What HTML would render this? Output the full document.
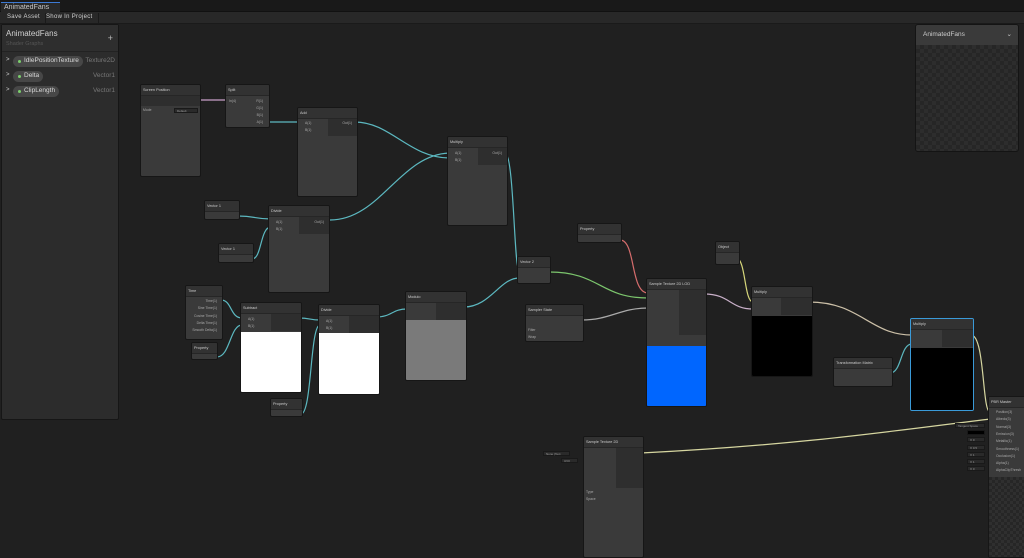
<!DOCTYPE html>
<html><head><meta charset="utf-8"><style>
*{margin:0;padding:0;box-sizing:border-box}
body{width:1024px;height:556px;background:#202020;overflow:hidden;position:relative;font-family:"Liberation Sans",sans-serif;color:#c4c4c4}
.tabbar{position:absolute;left:0;top:0;width:1024px;height:12px;background:#191919;border-bottom:1px solid #111}
.tab{position:absolute;left:1px;top:2px;width:59px;height:11px;background:#282828;border-top:1px solid #3d7ad4;font-size:7px;padding:1px 3px;color:#c8c8c8}
.tool{position:absolute;left:0;top:12px;width:1024px;height:12px;background:#282828;border-bottom:1px solid #1a1a1a}
.btn{position:absolute;top:1px;height:10px;font-size:6px;color:#d0d0d0;padding:1px 5px;border-right:1px solid #1a1a1a;letter-spacing:.3px}
.bb{position:absolute;left:1px;top:24px;width:118px;height:396px;background:#2c2c2c;border:1px solid #161616;border-radius:2px}
.bbh{height:27px;border-bottom:1px solid #222;background:#2e2e2e;padding:4px 4px}
.bbh .t{font-size:8px;color:#d0d0d0}
.bbh .s{font-size:5.5px;color:#555;margin-top:3px}
.prop{position:absolute;left:0;width:118px;height:13px;font-size:6.5px}
.pill{position:absolute;left:11px;top:1px;height:11px;border-radius:6px;background:#474747;padding:1px 4px 0 11px;color:#d8d8d8;white-space:nowrap}
.pill:before{content:"";position:absolute;left:5px;top:4px;width:3px;height:3px;border-radius:50%;background:#7ccf6d}
.arr{position:absolute;left:4px;top:2px;font-size:6px;color:#ccc}
.ty{position:absolute;right:5px;top:2px;color:#777}
.n{position:absolute;background:#3a3a3a;border:1px solid #161616;border-radius:2px;overflow:hidden;font-size:3.5px;color:#bbb}
.h{height:11px;background:#323232;border-bottom:1px solid #262626;padding:3px 2px;font-size:3.8px;color:#ccc;white-space:nowrap}
.pv{position:absolute;left:0;right:0;bottom:0}
.dk{position:absolute;background:#2e2e2e}
.sel{border:1px solid #3a9ad8}
.p{position:absolute;font-size:3.4px;color:#aaa;white-space:nowrap}
.d{position:absolute;width:3px;height:3px;border-radius:50%;background:#5cc0c8}
.prev{position:absolute;left:915px;top:24px;width:104px;height:128px;border:1px solid #141414;border-radius:3px;overflow:hidden;
background-color:#262626;background-image:linear-gradient(45deg,#2d2d2d 25%,transparent 25%,transparent 75%,#2d2d2d 75%),linear-gradient(45deg,#2d2d2d 25%,transparent 25%,transparent 75%,#2d2d2d 75%);background-size:8px 8px;background-position:0 0,4px 4px}
.prevh{height:20px;background:#3a3a3a;font-size:6.5px;color:#ccc;padding:6px 7px}
.chk{background-color:#262626;background-image:linear-gradient(45deg,#2f2f2f 25%,transparent 25%,transparent 75%,#2f2f2f 75%),linear-gradient(45deg,#2f2f2f 25%,transparent 25%,transparent 75%,#2f2f2f 75%);background-size:6px 6px;background-position:0 0,3px 3px}
.f{position:absolute;height:5px;background:#2a2a2a;border:1px solid #191919;font-size:3px;color:#999;padding-left:2px}
</style></head><body>
<div class="tabbar"><div class="tab">AnimatedFans</div></div>
<div class="tool"><div class="btn" style="left:2px">Save Asset</div><div class="btn" style="left:41px">Show In Project</div></div>

<svg style="position:absolute;left:0;top:0" width="1024" height="556" fill="none" stroke-width="1.2">
<g stroke="#5cb8c0">
<path d="M255 122 C280 122 275 122 301 122"/>
<path d="M355 122 C390 122 410 158 449 158"/>
<path d="M330 220 C380 220 400 155 449 153"/>
<path d="M238 216 C255 216 255 219 271 219"/>
<path d="M252 259 C262 259 260 227 271 227"/>
<path d="M505 153 C514 153 514 270 519 270"/>
<path d="M221 300 C232 300 230 318 242 318"/>
<path d="M217 357 C230 357 230 325 242 325"/>
<path d="M299 318 C310 318 310 320 320 320"/>
<path d="M301 414 C312 414 310 325 320 325"/>
<path d="M376 317 C392 317 392 309 407 309"/>
<path d="M464 307 C490 307 500 278 519 278"/>
<path d="M890 373 C902 373 900 344 912 344"/>
</g>
<path d="M198 100 L227 100" stroke="#c9a0c9"/>
<path d="M549 272 C600 272 600 298 648 298" stroke="#7cc66d"/>
<path d="M620 240 C636 240 630 293 648 293" stroke="#d56c6c"/>
<path d="M582 320 C610 320 620 308 648 308" stroke="#aaa"/>
<path d="M704 294 C730 294 730 309 753 309" stroke="#c9b0c9"/>
<path d="M736 258 C746 258 744 302 753 302" stroke="#d6d67a"/>
<path d="M809 302 C860 302 870 335 912 335" stroke="#ccc0a8"/>
<path d="M971 335 C985 335 982 412 990 412" stroke="#d6d6a0"/>
<path d="M641 453 C800 445 900 430 990 419" stroke="#d6d6a0"/>
</svg>

<div class="bb">
<div class="bbh"><div class="t">AnimatedFans</div><div class="s">Shader Graphs</div><div style="position:absolute;right:5px;top:8px;font-size:9px;color:#bbb">+</div></div>
<div class="prop" style="top:30px"><span class="arr">&gt;</span><span class="pill">IdlePositionTexture</span><span class="ty">Texture2D</span></div>
<div class="prop" style="top:45px"><span class="arr">&gt;</span><span class="pill">Delta</span><span class="ty">Vector1</span></div>
<div class="prop" style="top:60px"><span class="arr">&gt;</span><span class="pill">ClipLength</span><span class="ty">Vector1</span></div>
</div>

<div class="n" style="left:140px;top:84px;width:61px;height:93px"><div class="h">Screen Position</div><div class="dk" style="left:0;right:0;top:11px;height:10px"></div><span class="p" style="left:2px;top:23px">Mode</span><div class="f" style="left:33px;top:23px;width:24px">Default</div></div>
<div class="n" style="left:225px;top:84px;width:45px;height:44px"><div class="h">Split</div><span class="p" style="left:3px;top:14px">In(4)</span><span class="p" style="right:6px;top:14px">R(1)</span><span class="p" style="right:6px;top:21px">G(1)</span><span class="p" style="right:6px;top:28px">B(1)</span><span class="p" style="right:6px;top:35px">A(1)</span></div>
<div class="n" style="left:297px;top:107px;width:61px;height:90px"><div class="h">Add</div><div class="dk" style="left:30px;right:0;top:11px;height:17px"></div><span class="p" style="left:7px;top:13px">A(1)</span><span class="p" style="left:7px;top:20px">B(1)</span><span class="p" style="right:5px;top:13px">Out(1)</span></div>
<div class="n" style="left:447px;top:136px;width:61px;height:90px"><div class="h">Multiply</div><div class="dk" style="left:30px;right:0;top:11px;height:17px"></div><span class="p" style="left:7px;top:14px">A(1)</span><span class="p" style="left:7px;top:21px">B(1)</span><span class="p" style="right:5px;top:14px">Out(1)</span></div>
<div class="n" style="left:204px;top:200px;width:36px;height:20px"><div class="h">Vector 1</div></div>
<div class="n" style="left:268px;top:205px;width:62px;height:88px"><div class="h">Divide</div><div class="dk" style="left:30px;right:0;top:11px;height:17px"></div><span class="p" style="left:7px;top:14px">A(1)</span><span class="p" style="left:7px;top:21px">B(1)</span><span class="p" style="right:5px;top:14px">Out(1)</span></div>
<div class="n" style="left:218px;top:243px;width:36px;height:20px"><div class="h">Vector 1</div></div>
<div class="n" style="left:185px;top:285px;width:38px;height:55px"><div class="h">Time</div><span class="p" style="right:5px;top:13px">Time(1)</span><span class="p" style="right:5px;top:20px">Sine Time(1)</span><span class="p" style="right:5px;top:28px">Cosine Time(1)</span><span class="p" style="right:5px;top:35px">Delta Time(1)</span><span class="p" style="right:5px;top:42px">Smooth Delta(1)</span></div>
<div class="n" style="left:191px;top:342px;width:27px;height:18px"><div class="h">Property</div></div>
<div class="n" style="left:240px;top:302px;width:62px;height:91px"><div class="h">Subtract</div><div class="dk" style="left:30px;right:0;top:11px;height:17px"></div><span class="p" style="left:7px;top:14px">A(1)</span><span class="p" style="left:7px;top:21px">B(1)</span><div class="pv" style="top:29px;background:#fff"></div></div>
<div class="n" style="left:318px;top:304px;width:62px;height:91px"><div class="h">Divide</div><div class="dk" style="left:30px;right:0;top:11px;height:17px"></div><span class="p" style="left:7px;top:14px">A(1)</span><span class="p" style="left:7px;top:21px">B(1)</span><div class="pv" style="top:28px;background:#fff"></div></div>
<div class="n" style="left:270px;top:398px;width:33px;height:19px"><div class="h">Property</div></div>
<div class="n" style="left:405px;top:291px;width:62px;height:90px"><div class="h">Modulo</div><div class="dk" style="left:30px;right:0;top:11px;height:17px"></div><div class="pv" style="top:28px;background:#7a7a7a"></div></div>
<div class="n" style="left:517px;top:256px;width:34px;height:28px"><div class="h">Vector 2</div></div>
<div class="n" style="left:525px;top:304px;width:59px;height:38px"><div class="h">Sampler State</div><span class="p" style="left:2px;top:23px">Filter</span><span class="p" style="left:2px;top:30px">Wrap</span></div>
<div class="n" style="left:577px;top:223px;width:45px;height:20px"><div class="h">Property</div></div>
<div class="n" style="left:646px;top:278px;width:61px;height:129px"><div class="h">Sample Texture 2D LOD</div><div class="dk" style="left:32px;right:0;top:11px;height:45px"></div><div class="pv" style="top:67px;background:#0066ff"></div></div>
<div class="n" style="left:715px;top:241px;width:25px;height:24px"><div class="h">Object</div></div>
<div class="n" style="left:751px;top:286px;width:62px;height:91px"><div class="h">Multiply</div><div class="dk" style="left:29px;right:0;top:11px;height:17px"></div><div class="pv" style="top:29px;background:#000"></div></div>
<div class="n" style="left:833px;top:357px;width:60px;height:30px"><div class="h">Transformation Matrix</div></div>
<div class="n sel" style="left:910px;top:318px;width:64px;height:93px"><div class="h">Multiply</div><div class="dk" style="left:31px;right:0;top:11px;height:17px"></div><div class="pv" style="top:29px;background:#000"></div></div>
<div class="n" style="left:988px;top:396px;width:40px;height:162px"><div class="h">PBR Master</div><span class="p" style="left:7px;top:13px">Position(3)</span><span class="p" style="left:7px;top:20px">Albedo(3)</span><span class="p" style="left:7px;top:28px">Normal(3)</span><span class="p" style="left:7px;top:35px">Emission(3)</span><span class="p" style="left:7px;top:42px">Metallic(1)</span><span class="p" style="left:7px;top:50px">Smoothness(1)</span><span class="p" style="left:7px;top:57px">Occlusion(1)</span><span class="p" style="left:7px;top:64px">Alpha(1)</span><span class="p" style="left:7px;top:71px">AlphaClipThresh</span><div class="pv chk" style="top:80px"></div></div>
<div class="f" style="left:955px;top:423px;width:30px">Tangent Space</div>
<div class="f" style="left:967px;top:430px;width:18px;background:#000"></div>
<div class="f" style="left:967px;top:437px;width:18px">X 0</div>
<div class="f" style="left:967px;top:445px;width:18px">X 0.5</div>
<div class="f" style="left:967px;top:452px;width:18px">X 1</div>
<div class="f" style="left:967px;top:459px;width:18px">X 1</div>
<div class="f" style="left:967px;top:466px;width:18px">X 0</div>
<div class="n" style="left:583px;top:436px;width:61px;height:122px"><div class="h">Sample Texture 2D</div><div class="dk" style="left:32px;right:0;top:11px;height:40px"></div><span class="p" style="left:2px;top:53px">Type</span><span class="p" style="left:2px;top:60px">Space</span></div>
<div class="f" style="left:543px;top:451px;width:27px">None (Text</div>
<div class="f" style="left:561px;top:458px;width:17px">UV0</div>
<div class="prev"><div class="prevh">AnimatedFans<span style="position:absolute;right:6px;top:5px">&#8964;</span></div></div>
</body></html>
